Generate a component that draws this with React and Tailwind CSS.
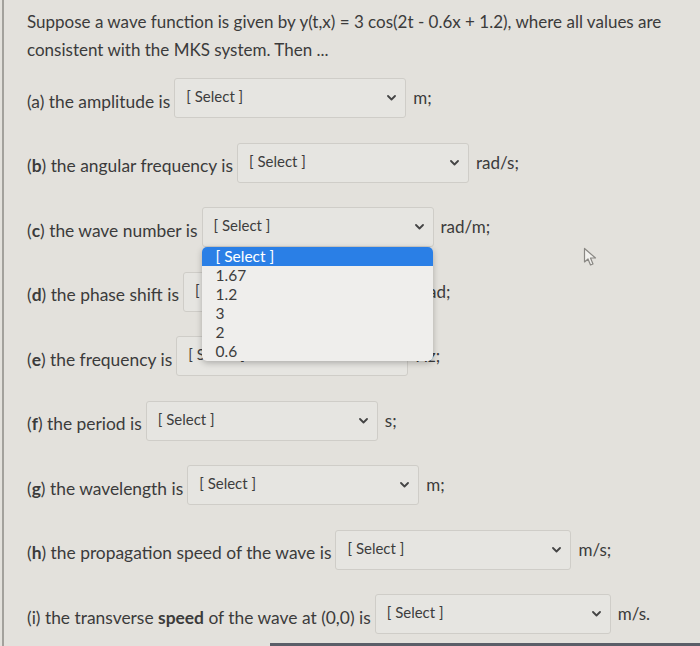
import React from "react";

const Chevron = () => (
  <svg width="9" height="6" viewBox="0 0 9 6" className="shrink-0">
    <path d="M1 1 L4.5 4.5 L8 1" fill="none" stroke="#444" strokeWidth="1.8" strokeLinecap="round" strokeLinejoin="round" />
  </svg>
);

const Select = ({ w = "w-[232px]", children }) => (
  <div className={`${w} h-[40px] shrink-0 relative`}>
    <div className="w-full h-full border border-[#cfcdc8] rounded-[3px] bg-[#e6e5e1] flex items-center justify-between pl-[11px] pr-[9px]">
      <span className="text-[15px] text-[#3d3d3d] -mt-[3px]">[ Select ]</span>
      <Chevron />
    </div>
    {children}
  </div>
);

const Row = ({ label, unit, w, children }) => (
  <div className="flex items-center h-[40px]">
    <span className="pt-[8px] pr-[4px] whitespace-nowrap text-[17.4px]">{label}</span>
    <Select w={w}>{children}</Select>
    <span className="pl-[7px] whitespace-nowrap text-[17px]">{unit}</span>
  </div>
);

const B = ({ children }) => <span className="font-bold">{children}</span>;

export default function App() {
  const items = ["1.67", "1.2", "3", "2", "0.6"];
  return (
    <div
      className="w-[700px] h-[646px] bg-[#e3e1dc] relative overflow-hidden text-[17px] text-[#3b3b3b]"
      style={{ fontFamily: "Lato, 'Noto Sans', sans-serif" }}
    >
      <div className="absolute left-[2px] top-0 bottom-0 w-[2px] bg-[#a3a19c]" />
      <div className="absolute left-[270px] right-0 bottom-0 h-[3px] bg-[#5a5e68]" />
      <div className="pl-[27px] pt-[8px]">
        <p className="leading-[28px] w-[660px]">
          Suppose a wave function is given by y(t,x) = 3 cos(2t - 0.6x + 1.2), where all values are consistent with the MKS system. Then ...
        </p>
        <div className="mt-[14px] flex flex-col gap-[24.5px]">
          <Row label={<>(a) the amplitude is</>} unit="m;" />
          <Row label={<>(<B>b</B>) the angular frequency is</>} unit="rad/s;" />
          <Row label={<>(<B>c</B>) the wave number is</>} unit="rad/m;">
            <div className="absolute left-0 top-[40px] w-[231px] rounded-[5px] bg-[#efeeec] shadow-[0_2px_6px_rgba(0,0,0,0.25)] z-10 overflow-hidden text-[15.5px] leading-[19px]">
              <div className="bg-[#2a7fe6] text-white pl-[14px] h-[19px]">[ Select ]</div>
              {items.map((t) => (
                <div key={t} className="pl-[14px] h-[19px] text-[#3d3d3d]">{t}</div>
              ))}
            </div>
          </Row>
          <Row label={<>(<B>d</B>) the phase shift is</>} unit="rad;" />
          <Row label={<>(<B>e</B>) the frequency is</>} unit="Hz;" />
          <Row label={<>(<B>f</B>) the period is</>} unit="s;" />
          <Row label={<>(<B>g</B>) the wavelength is</>} unit="m;" />
          <Row label={<>(<B>h</B>) the propagation speed of the wave is</>} unit="m/s;" w="w-[236px]" />
          <Row label={<>(i) the transverse <B>speed</B> of the wave at (0,0) is</>} unit="m/s." w="w-[236px]" />
        </div>
      </div>
      <svg className="absolute left-[583px] top-[247px]" width="16" height="20" viewBox="0 0 16 20">
        <path d="M1.5 1.5 L1.5 15 L5 12 L7.5 18 L10 17 L7.5 11 L12.5 11 Z" fill="#f2f1ee" stroke="#8a8884" strokeWidth="1.2" strokeLinejoin="round" />
      </svg>
    </div>
  );
}
